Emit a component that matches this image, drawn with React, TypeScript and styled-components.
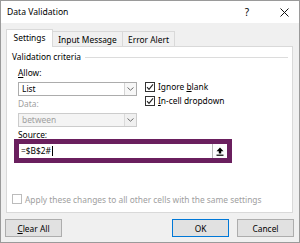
import styled, { createGlobalStyle } from "styled-components";

const GlobalStyle = createGlobalStyle`
  html, body { margin: 0; padding: 0; background: #fff; }
  body {
    font-family: "Noto Sans", "Open Sans", sans-serif;
    font-size: 8.4px;
    color: #000;
  }
  * { box-sizing: border-box; }
`;

const Window = styled.div`
  width: 300px;
  height: 243px;
  border: 1px solid #9a9a9a;
  background: #f0f0f0;
  display: flex;
  flex-direction: column;
  overflow: hidden;
`;

const TitleBar = styled.div`
  height: 22px;
  background: #fff;
  display: flex;
  align-items: center;
  padding-left: 6px;
`;

const Title = styled.div`
  flex: 1;
  line-height: 12px;
  font-size: 8.6px;
`;

const TitleButton = styled.div<{ $mr?: number }>`
  width: 30px;
  height: 22px;
  display: flex;
  align-items: center;
  justify-content: center;
  margin-right: ${(p) => p.$mr ?? 0}px;
  font-size: 10px;
`;

const Body = styled.div`
  display: flex;
  flex-direction: column;
  padding: 6px 6px 0 5px;
`;

const TabRow = styled.div`
  display: flex;
  align-items: flex-end;
  height: 18px;
  margin-bottom: -1px;
`;

const Tab = styled.div<{ $w: number; $active?: boolean }>`
  width: ${(p) => p.$w}px;
  height: ${(p) => (p.$active ? 18 : 16)}px;
  display: flex;
  align-items: center;
  justify-content: center;
  white-space: nowrap;
  border: 1px solid #d9d9d9;
  border-bottom: ${(p) => (p.$active ? "none" : "1px solid #d9d9d9")};
  border-left: ${(p) => (p.$active ? "1px solid #d9d9d9" : "none")};
  background: ${(p) => (p.$active ? "#fff" : "#f0f0f0")};
  position: relative;
  z-index: ${(p) => (p.$active ? 1 : 0)};
  padding-bottom: ${(p) => (p.$active ? 2 : 0)}px;
`;

const Panel = styled.div`
  height: 167px;
  background: #fff;
  border: 1px solid #d9d9d9;
  display: flex;
  flex-direction: column;
  padding: 4px 0 7px 5px;
`;

const GroupHeader = styled.div`
  display: flex;
  align-items: center;
  gap: 4px;
  line-height: 12px;
  margin-right: 4px;
  white-space: nowrap;
`;

const GroupLine = styled.div`
  flex: 1;
  height: 1px;
  background: #dcdcdc;
`;

const Fields = styled.div`
  margin-left: 6px;
  margin-top: 4px;
  display: flex;
  flex-direction: column;
`;

const TopRow = styled.div`
  display: flex;
  gap: 8px;
`;

const LeftCol = styled.div`
  width: 119px;
  display: flex;
  flex-direction: column;
`;

const RightCol = styled.div`
  display: flex;
  flex-direction: column;
  padding-top: 15px;
`;

const Label = styled.div<{ $mt?: number; $disabled?: boolean }>`
  line-height: 12px;
  margin-top: ${(p) => p.$mt ?? 0}px;
  color: ${(p) => (p.$disabled ? "#a0a0a0" : "#000")};
`;

const Select = styled.div<{ $disabled?: boolean }>`
  height: 14px;
  margin-top: 3px;
  display: flex;
  border: 1px solid ${(p) => (p.$disabled ? "#cccccc" : "#acacac")};
  background: ${(p) => (p.$disabled ? "#f4f4f4" : "#fff")};
  color: ${(p) => (p.$disabled ? "#a0a0a0" : "#000")};
`;

const SelectText = styled.div`
  flex: 1;
  padding-left: 3px;
  line-height: 12px;
`;

const DropButton = styled.div<{ $disabled?: boolean }>`
  width: 12px;
  display: flex;
  align-items: center;
  justify-content: center;
  border-left: 1px solid ${(p) => (p.$disabled ? "#dadada" : "#d4d4d4")};
  background: ${(p) => (p.$disabled ? "#f0f0f0" : "#f7f7f7")};
`;

const CheckRow = styled.div`
  height: 14px;
  display: flex;
  align-items: flex-start;
  gap: 3px;
  white-space: nowrap;
`;

const Box = styled.div<{ $disabled?: boolean }>`
  flex-shrink: 0;
  width: 10px;
  height: 10px;
  border: 1px solid ${(p) => (p.$disabled ? "#bcbcbc" : "#333")};
  background: #fff;
  display: flex;
  align-items: center;
  justify-content: center;
`;

const CheckText = styled.div`
  line-height: 10px;
`;

const SourceFrame = styled.div`
  width: 218px;
  margin-left: -4px;
  margin-top: -2px;
  border: 5px solid #6a1f5e;
  display: flex;
`;

const SourceInput = styled.div`
  flex: 1;
  height: 14px;
  background: #fff;
  display: flex;
  align-items: center;
  padding-left: 2px;
  line-height: 12px;
`;

const Caret = styled.span`
  display: inline-block;
  width: 1px;
  height: 10px;
  background: #000;
  margin-left: 1px;
`;

const RefButton = styled.div`
  width: 15px;
  height: 14px;
  background: #fdfdfd;
  border-left: 1px solid #b8b8b8;
  display: flex;
  align-items: center;
  justify-content: center;
`;

const ApplyRow = styled.div`
  margin-top: auto;
  height: 12px;
  display: flex;
  align-items: center;
  gap: 3px;
  white-space: nowrap;
  color: #a0a0a0;
`;

const Footer = styled.div`
  display: flex;
  gap: 8px;
  padding: 6px 5px 0 4px;
`;

const Button = styled.div<{ $primary?: boolean }>`
  width: 57px;
  height: 18px;
  display: flex;
  align-items: center;
  justify-content: center;
  background: #e1e1e1;
  border: 1px solid ${(p) => (p.$primary ? "#0078d7" : "#adadad")};
`;

const Spacer = styled.div`
  flex: 1;
`;

const Chevron = () => (
  <svg width="7" height="4" viewBox="0 0 7 4">
    <path d="M0.5 0.5 L3.5 3.2 L6.5 0.5" fill="none" stroke="#6d6d6d" strokeWidth="1" />
  </svg>
);

const Check = () => (
  <svg width="8" height="8" viewBox="0 0 8 8">
    <path d="M1 4.2 L3 6.3 L7 1.3" fill="none" stroke="#222" strokeWidth="1.1" />
  </svg>
);

const UploadIcon = () => (
  <svg width="8" height="9" viewBox="0 0 8 9">
    <path d="M4 0.5 L7.5 4.2 H5.2 V6.6 H2.8 V4.2 H0.5 Z" fill="#000" />
    <rect x="0.5" y="7.6" width="7" height="1.2" fill="#000" />
  </svg>
);

const CloseIcon = () => (
  <svg width="9" height="9" viewBox="0 0 9 9">
    <path d="M0.5 0.5 L8.5 8.5 M8.5 0.5 L0.5 8.5" stroke="#111" strokeWidth="1" />
  </svg>
);

export default function App() {
  return (
    <>
      <GlobalStyle />
      <Window>
        <TitleBar>
          <Title>Data Validation</Title>
          <TitleButton $mr={7}>?</TitleButton>
          <TitleButton>
            <CloseIcon />
          </TitleButton>
        </TitleBar>
        <Body>
          <TabRow>
            <Tab $w={47} $active>
              Settings
            </Tab>
            <Tab $w={70}>Input Message</Tab>
            <Tab $w={52}>Error Alert</Tab>
          </TabRow>
          <Panel>
            <GroupHeader>
              Validation criteria
              <GroupLine />
            </GroupHeader>
            <Fields>
              <TopRow>
                <LeftCol>
                  <Label>
                    <u>A</u>llow:
                  </Label>
                  <Select>
                    <SelectText>List</SelectText>
                    <DropButton>
                      <Chevron />
                    </DropButton>
                  </Select>
                  <Label $mt={2} $disabled>
                    Data:
                  </Label>
                  <Select $disabled>
                    <SelectText>between</SelectText>
                    <DropButton $disabled>
                      <Chevron />
                    </DropButton>
                  </Select>
                </LeftCol>
                <RightCol>
                  <CheckRow>
                    <Box>
                      <Check />
                    </Box>
                    <CheckText>
                      Ignore <u>b</u>lank
                    </CheckText>
                  </CheckRow>
                  <CheckRow>
                    <Box>
                      <Check />
                    </Box>
                    <CheckText>
                      <u>I</u>n-cell dropdown
                    </CheckText>
                  </CheckRow>
                </RightCol>
              </TopRow>
              <Label $mt={2}>Source:</Label>
              <SourceFrame>
                <SourceInput>
                  =$B$2#
                  <Caret />
                </SourceInput>
                <RefButton>
                  <UploadIcon />
                </RefButton>
              </SourceFrame>
            </Fields>
            <ApplyRow>
              <Box $disabled />
              <span>Apply these changes to all other cells with the same settings</span>
            </ApplyRow>
          </Panel>
        </Body>
        <Footer>
          <Button>
            <span>
              <u>C</u>lear All
            </span>
          </Button>
          <Spacer />
          <Button $primary>OK</Button>
          <Button>Cancel</Button>
        </Footer>
      </Window>
    </>
  );
}
